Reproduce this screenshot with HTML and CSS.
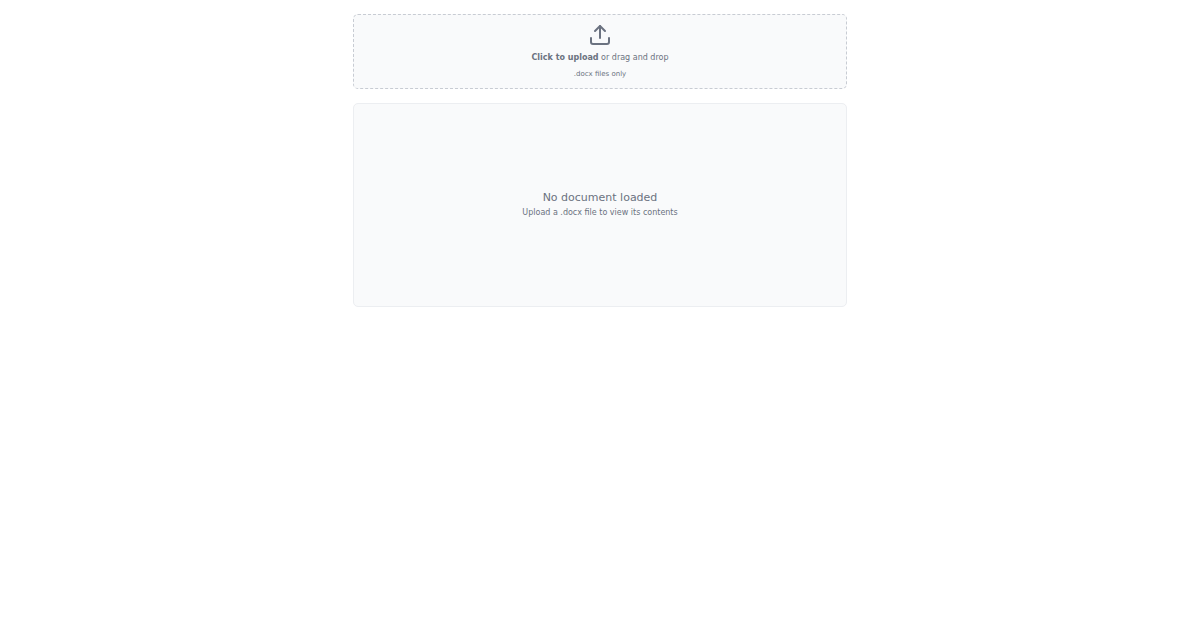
FILE: index.html
```html
<!DOCTYPE html>
<html lang="en">
  <head>
    <meta charset="UTF-8" />
    <meta name="viewport" content="width=device-width, initial-scale=1.0" />
    <title>Document Viewer</title>
    <link rel="stylesheet" href="styles.css">
  </head>
  <body>
    <main class="container">
      <label class="dropzone" for="file-input">
        <svg class="upload-icon" viewBox="0 0 24 24" aria-hidden="true">
          <path d="M21 15v4a2 2 0 0 1-2 2H5a2 2 0 0 1-2-2v-4" />
          <path d="M17 8l-5-5-5 5" />
          <path d="M12 3v12" />
        </svg>
        <span class="upload-text"><strong>Click to upload</strong> or drag and drop</span>
        <span class="upload-hint">.docx files only</span>
        <input class="file-input" id="file-input" type="file" accept=".docx" />
      </label>

      <section class="viewer">
        <p class="viewer-title">No document loaded</p>
        <p class="viewer-text">Upload a .docx file to view its contents</p>
      </section>
    </main>
  </body>
</html>
```
FILE: styles.css
```css
* {
  margin: 0;
  padding: 0;
  box-sizing: border-box;
}

body {
  background: #fff;
  color: #6b7280;
  font-family: 'DejaVu Sans', sans-serif;
}

.container {
  display: flex;
  flex-direction: column;
  gap: 14px;
  max-width: 522px;
  margin: 0 auto;
  padding: 14px;
}

.dropzone {
  display: flex;
  flex-direction: column;
  align-items: center;
  padding: 8px 14px;
  background: #f9fafb;
  border: 1px dashed #c8ccd3;
  border-radius: 5px;
  cursor: pointer;
}

.dropzone:hover {
  background: #f3f4f6;
}

.upload-icon {
  width: 24px;
  height: 24px;
  margin-bottom: 4px;
  fill: none;
  stroke: currentColor;
  stroke-width: 2;
  stroke-linecap: round;
  stroke-linejoin: round;
}

.upload-text {
  font-size: 8px;
  line-height: 14px;
  margin-bottom: 3px;
}

.upload-hint {
  font-size: 7px;
  line-height: 12px;
}

.file-input {
  display: none;
}

.viewer {
  display: flex;
  flex-direction: column;
  align-items: center;
  justify-content: center;
  min-height: 204px;
  background: #f9fafb;
  border: 1px solid #eceef1;
  border-radius: 5px;
}

.viewer-title {
  font-size: 11px;
  line-height: 16px;
}

.viewer-text {
  font-size: 8px;
  line-height: 14px;
}
```
